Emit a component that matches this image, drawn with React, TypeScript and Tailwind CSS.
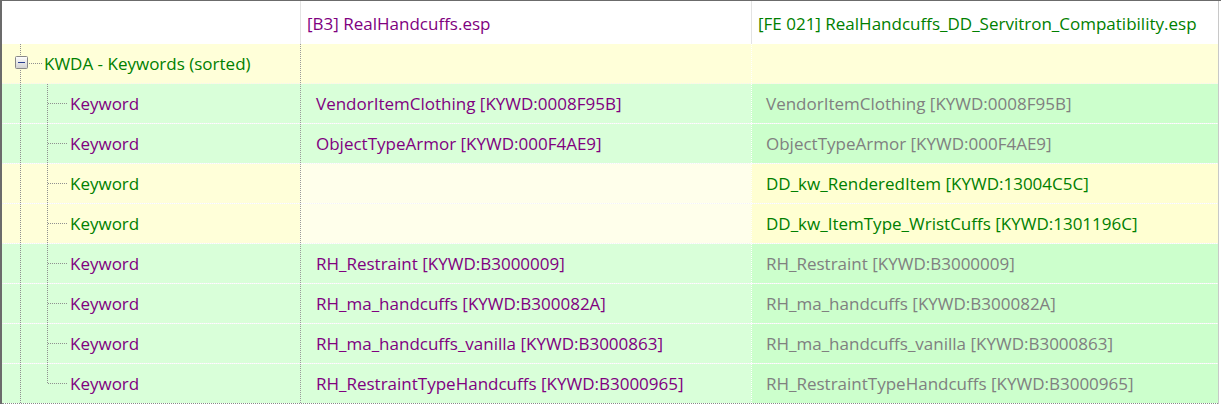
import React from "react";

const PURPLE = "text-[#800080]";
const GREEN = "text-[#008000]";
const GRAY = "text-[#808080]";

type Row = {
  label: string;
  labelColor: string;
  c1bg: string;
  c2: string;
  c2color: string;
  c2bg: string;
  c3: string;
  c3color: string;
  c3bg: string;
  last?: boolean;
};

const G1 = "bg-[#d9ffd9]";
const G3 = "bg-[#ccffcc]";
const Y1 = "bg-[#ffffd9]";
const Y2 = "bg-[#ffffeb]";
const Y3 = "bg-[#ffffd2]";

const rows: Row[] = [
  { label: "Keyword", labelColor: PURPLE, c1bg: G1, c2: "VendorItemClothing [KYWD:0008F95B]", c2color: PURPLE, c2bg: G1, c3: "VendorItemClothing [KYWD:0008F95B]", c3color: GRAY, c3bg: G3 },
  { label: "Keyword", labelColor: PURPLE, c1bg: G1, c2: "ObjectTypeArmor [KYWD:000F4AE9]", c2color: PURPLE, c2bg: G1, c3: "ObjectTypeArmor [KYWD:000F4AE9]", c3color: GRAY, c3bg: G3 },
  { label: "Keyword", labelColor: GREEN, c1bg: Y1, c2: "", c2color: PURPLE, c2bg: Y2, c3: "DD_kw_RenderedItem [KYWD:13004C5C]", c3color: GREEN, c3bg: Y3 },
  { label: "Keyword", labelColor: GREEN, c1bg: Y1, c2: "", c2color: PURPLE, c2bg: Y2, c3: "DD_kw_ItemType_WristCuffs [KYWD:1301196C]", c3color: GREEN, c3bg: Y3 },
  { label: "Keyword", labelColor: PURPLE, c1bg: G1, c2: "RH_Restraint [KYWD:B3000009]", c2color: PURPLE, c2bg: G1, c3: "RH_Restraint [KYWD:B3000009]", c3color: GRAY, c3bg: G3 },
  { label: "Keyword", labelColor: PURPLE, c1bg: G1, c2: "RH_ma_handcuffs [KYWD:B300082A]", c2color: PURPLE, c2bg: G1, c3: "RH_ma_handcuffs [KYWD:B300082A]", c3color: GRAY, c3bg: G3 },
  { label: "Keyword", labelColor: PURPLE, c1bg: G1, c2: "RH_ma_handcuffs_vanilla [KYWD:B3000863]", c2color: PURPLE, c2bg: G1, c3: "RH_ma_handcuffs_vanilla [KYWD:B3000863]", c3color: GRAY, c3bg: G3 },
  { label: "Keyword", labelColor: PURPLE, c1bg: G1, c2: "RH_RestraintTypeHandcuffs [KYWD:B3000965]", c2color: PURPLE, c2bg: G1, c3: "RH_RestraintTypeHandcuffs [KYWD:B3000965]", c3color: GRAY, c3bg: G3, last: true },
];

const DOT = "#909090";

function RootLines() {
  return (
    <svg width="42" height="39" className="shrink-0">
      <line x1="18.5" y1="0" x2="18.5" y2="12" stroke={DOT} strokeDasharray="1 1" />
      <line x1="18.5" y1="26" x2="18.5" y2="39" stroke={DOT} strokeDasharray="1 1" />
      <defs>
        <linearGradient id="boxg" x1="0" y1="0" x2="0" y2="1">
          <stop offset="0" stopColor="#ffffff" />
          <stop offset="1" stopColor="#d0d0d0" />
        </linearGradient>
      </defs>
      <rect x="13.5" y="12.5" width="12" height="12" fill="url(#boxg)" stroke="#888888" rx="1" />
      <line x1="16" y1="18.5" x2="23" y2="18.5" stroke="#2a3f8f" strokeWidth="1" />
      <line x1="27" y1="19.5" x2="40" y2="19.5" stroke={DOT} strokeDasharray="1 1" />
    </svg>
  );
}

function ChildLines({ last }: { last?: boolean }) {
  return (
    <svg width="68" height="39" className="shrink-0">
      <line x1="18.5" y1="0" x2="18.5" y2="39" stroke={DOT} strokeDasharray="1 1" />
      <line x1="45.5" y1="0" x2="45.5" y2={last ? 20 : 39} stroke={DOT} strokeDasharray="1 1" />
      <line x1="46" y1="19.5" x2="66" y2="19.5" stroke={DOT} strokeDasharray="1 1" />
    </svg>
  );
}

export default function App() {
  return (
    <div
      className="w-[1221px] h-[404px] overflow-hidden bg-white border-t border-l-2 border-[#6b6b6b] text-[17px]"
      style={{ fontFamily: '"Open Sans", "Noto Sans", sans-serif' }}
    >
      <div className="flex w-[1217px] h-[403px] border-r border-[#c8c8c8]">
        <div className="flex flex-col w-full">
          {/* header */}
          <div className="flex h-[43px] bg-white">
            <div className="w-[298px] shrink-0" />
            <div className={`w-[451px] shrink-0 border-l border-[#e3e3e3] flex items-center pl-[6px] pt-[3px] ${PURPLE}`}>
              [B3] RealHandcuffs.esp
            </div>
            <div className={`flex-1 border-l border-[#e3e3e3] flex items-center pl-[6px] pt-[3px] ${GREEN}`}>
              [FE 021] RealHandcuffs_DD_Servitron_Compatibility.esp
            </div>
          </div>
          {/* KWDA row */}
          <div className="flex h-[40px] border-b border-dotted border-[#f4f4f4] bg-[#ffffd9]">
            <div className="w-[298px] shrink-0 flex items-center">
              <RootLines />
              <span className={`${GREEN} pt-[1px]`}>KWDA - Keywords (sorted)</span>
            </div>
            <div className="w-[451px] shrink-0 border-l border-dotted border-[#9a9a9a]" />
            <div className="flex-1 border-l border-dotted border-[#ffffff]" />
          </div>
          {rows.map((r, i) => (
            <div
              key={i}
              className={`flex h-[40px] border-b border-dotted ${r.last ? "border-[#8a8a8a]" : "border-[#f4f4f4]"}`}
            >
              <div className={`w-[298px] shrink-0 flex items-center ${r.c1bg}`}>
                <ChildLines last={r.last} />
                <span className={`${r.labelColor} pt-[1px]`}>{r.label}</span>
              </div>
              <div className={`w-[451px] shrink-0 border-l border-dotted border-[#9a9a9a] flex items-center pl-[15px] ${r.c2bg} ${r.c2color}`}>
                <span className="pt-[1px]">{r.c2}</span>
              </div>
              <div className={`flex-1 border-l border-dotted border-[#ffffff] flex items-center pl-[14px] ${r.c3bg} ${r.c3color}`}>
                <span className="pt-[1px]">{r.c3}</span>
              </div>
            </div>
          ))}
        </div>
      </div>
    </div>
  );
}
